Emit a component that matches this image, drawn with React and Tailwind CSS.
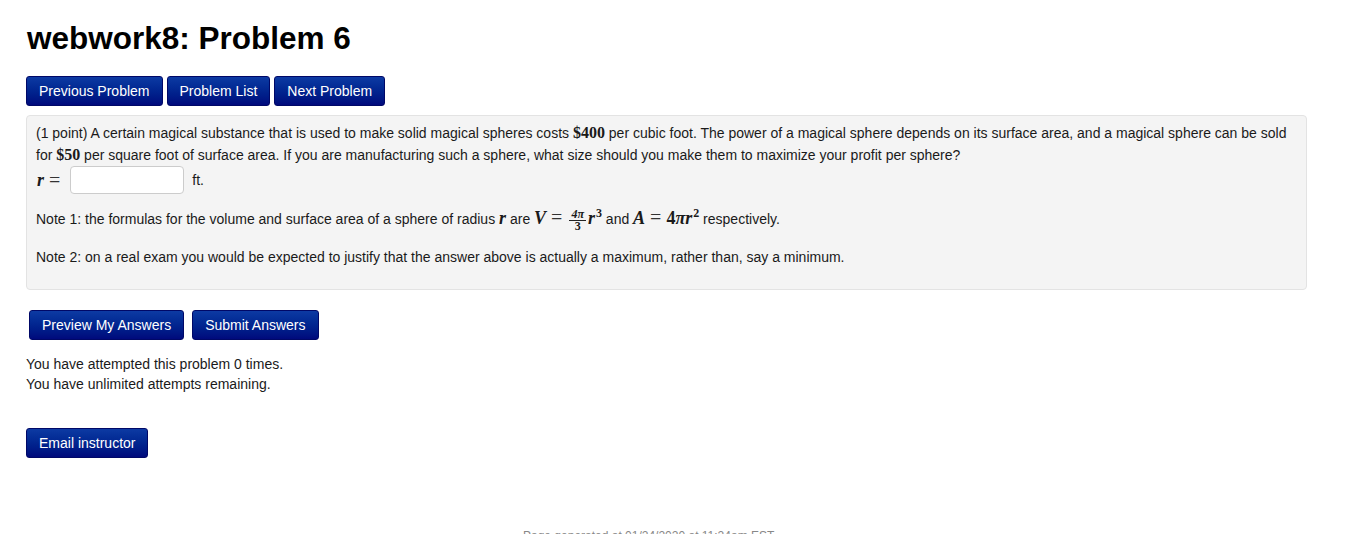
import React from "react";

const Btn = ({ children, className = "" }) => (
  <button
    className={`h-[30px] rounded-[3px] border border-[#000867] bg-gradient-to-b from-[#0d3aa3] to-[#00097c] px-[12px] text-[14px] leading-none text-white ${className}`}
  >
    {children}
  </button>
);

const serif = "font-['Liberation_Serif',serif]";

const M = ({ children, className = "" }) => (
  <span className={`${serif} font-bold text-[16px] ${className}`}>{children}</span>
);

const V = ({ children, className = "" }) => (
  <span className={`${serif} font-bold italic text-[18px] leading-none ${className}`}>{children}</span>
);

const Eq = () => <span className={`${serif} mx-[5px] text-[20px] leading-none text-[#333]`}>=</span>;

const Frac = () => (
  <span className={`${serif} mx-[2px] inline-flex flex-col items-center align-middle text-[12px] font-bold leading-[9px]`}>
    <span className="border-b border-[#222] px-[2px] pb-[1px] italic">4π</span>
    <span className="pt-[1px]">3</span>
  </span>
);

const Sup = ({ children }) => (
  <span className={`${serif} relative -top-[7px] ml-[1px] text-[12px] font-bold leading-none`}>{children}</span>
);

export default function App() {
  return (
    <div className="min-h-[534px] bg-white font-['Liberation_Sans',Arial,sans-serif] text-[#1a1a1a]">
      <div className="px-[26px] pt-[19px]">
        <h1 className="pl-[1px] text-[31.5px] font-bold leading-[38px] text-black">webwork8: Problem 6</h1>

        <div className="mt-[19px] flex gap-[4px]">
          <Btn>Previous Problem</Btn>
          <Btn>Problem List</Btn>
          <Btn>Next Problem</Btn>
        </div>

        <div className="mt-[9px] mr-[25px] rounded-[4px] border border-[#e3e3e3] bg-[#f4f4f4] px-[9px] pt-[6px] pb-[21px] text-[14px] leading-[22px]">
          <p>
            (1 point) A certain magical substance that is used to make solid magical spheres costs <M>$400</M> per
            cubic foot. The power of a magical sphere depends on its surface area, and a magical sphere can be sold
            for <M>$50</M> per square foot of surface area. If you are manufacturing such a sphere, what size should
            you make them to maximize your profit per sphere?
          </p>
          <div className="flex h-[28px] items-center">
            <span className="flex items-center pl-[1px]">
              <V className="text-[17px]">r</V>
              <Eq />
            </span>
            <input
              type="text"
              className="ml-[5px] h-[28px] w-[114px] rounded-[4px] border border-[#cccccc] bg-white"
            />
            <span className="ml-[8px]">ft.</span>
          </div>
          <p className="mt-[13px]">
            Note 1: the formulas for the volume and surface area of a sphere of radius <V className="text-[17px]">r</V> are{" "}
            <V>V</V>
            <Eq />
            <Frac />
            <V>r</V>
            <Sup>3</Sup> and <V>A</V>
            <Eq />
            <M className="text-[18px]">4</M>
            <V>πr</V>
            <Sup>2</Sup> respectively.
          </p>
          <p className="mt-[15px]">
            Note 2: on a real exam you would be expected to justify that the answer above is actually a maximum,
            rather than, say a minimum.
          </p>
        </div>

        <div className="mt-[20px] ml-[3px] flex gap-[8px]">
          <Btn>Preview My Answers</Btn>
          <Btn>Submit Answers</Btn>
        </div>

        <div className="mt-[14px] text-[14px] leading-[20px]">
          <p>You have attempted this problem 0 times.</p>
          <p>You have unlimited attempts remaining.</p>
        </div>

        <div className="mt-[34px]">
          <Btn>Email instructor</Btn>
        </div>

        <p className="mt-[70px] pl-[497px] text-[12px] leading-[16px] text-[#888]">
          Page generated at 01/24/2020 at 11:24am EST
        </p>
      </div>
    </div>
  );
}
